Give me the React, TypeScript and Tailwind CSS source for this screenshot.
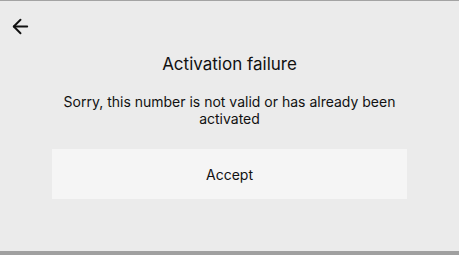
import { ArrowLeft } from "lucide-react";

const App = () => {
  return (
    <div className="w-[459px] h-[255px] flex flex-col bg-[#ebebeb] border-t border-[#a3a3a3] font-['Inter',sans-serif] text-[#111]">
      <div className="flex-1 flex flex-col">
        <div className="pl-[9px] pt-[14px] h-[42px]">
          <ArrowLeft className="w-[23px] h-[23px]" strokeWidth={2} />
        </div>
        <h1 className="text-center text-[17px] leading-[24px] mt-[9px]">Activation failure</h1>
        <p className="text-center text-[14px] leading-[17px] mt-[17px] px-[60px]">
          Sorry, this number is not valid or has already been activated
        </p>
        <div className="px-[52px] mt-[22px]">
          <button className="w-full h-[50px] bg-[#f5f5f5] text-[14px]">Accept</button>
        </div>
      </div>
      <div className="h-[4px] bg-[#a0a0a0]" />
    </div>
  );
};

export default App;
